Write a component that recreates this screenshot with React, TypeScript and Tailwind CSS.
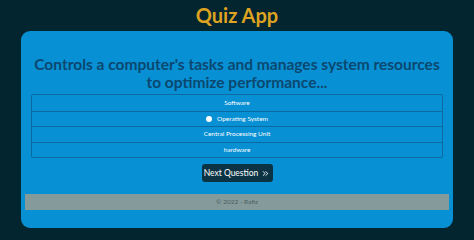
import React from "react";
import { ChevronsRight } from "lucide-react";

const options = ["Software", "Operating System", "Central Processing Unit", "hardware"];

export default function App() {
  return (
    <div className="min-h-screen bg-[#03252f] font-['Lato',sans-serif] pt-[2px]">
      <h1 className="text-center text-[20px] leading-[26px] font-bold text-[#dea321]">Quiz App</h1>
      <div className="mx-[21px] mt-[3px] rounded-[9px] bg-[#0890d4] px-[4px] pt-[24px] pb-[18px]">
        <h2 className="text-center text-[15.5px] leading-[18px] font-bold text-[#0b4870] whitespace-nowrap">
          Controls a computer's tasks and manages system resources
          <br />
          to optimize performance...
        </h2>
        <div className="mx-[6px] mt-[3px] flex flex-col border border-[#0b6aa0] rounded-[2px]">
          {options.map((o, i) => (
            <div
              key={o}
              className={
                "h-[15.5px] flex items-center justify-center gap-[5px] text-[6.5px] text-white " +
                (i > 0 ? "border-t border-[#0b6aa0]" : "")
              }
            >
              {i === 1 && <span className="w-[6px] h-[6px] rounded-full bg-white" />}
              <span>{o}</span>
            </div>
          ))}
        </div>
        <div className="flex justify-center mt-[6px]">
          <button className="h-[18px] w-[71px] rounded-[3px] bg-[#0c3344] text-white text-[8.5px] font-normal flex items-center justify-center gap-[3px]">
            <span>Next Question</span>
            <ChevronsRight size={9} strokeWidth={2.5} />
          </button>
        </div>
        <div className="mt-[12px] h-[16px] bg-[#849a9b] flex items-center justify-center text-[6.5px] text-[#4d5e60]">
          © 2022 - Rafiz
        </div>
      </div>
    </div>
  );
}
